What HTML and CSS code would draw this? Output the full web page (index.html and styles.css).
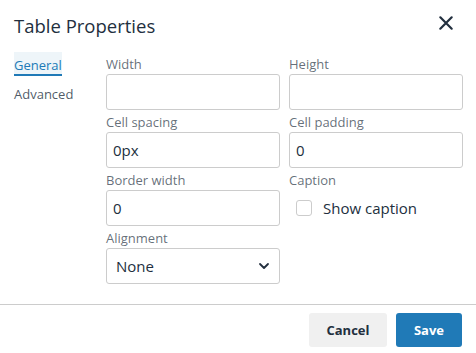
FILE: index.html
```html
<!DOCTYPE html>
<html lang="en">
<head>
  <meta charset="UTF-8">
  <title>Table Properties</title>
  <meta name="viewport" content="width=device-width, initial-scale=1">
  <link rel="stylesheet" href="styles.css">
</head>
<body>
  <div class="dialog">
    <div class="dialog-header">
      <h2>Table Properties</h2>
      <button class="close" aria-label="Close">
        <svg width="24" height="24" viewBox="0 0 24 24"><path d="M6.3 6.3l11.4 11.4M17.7 6.3l-11.4 11.4" stroke="#222f3e" stroke-width="2.2" stroke-linecap="round"/></svg>
      </button>
    </div>

    <div class="dialog-body">
      <div class="tabs">
        <div class="tab active">General</div>
        <div class="tab">Advanced</div>
      </div>

      <form class="form-grid">
        <div class="field">
          <label for="width">Width</label>
          <input type="text" id="width">
        </div>
        <div class="field">
          <label for="height">Height</label>
          <input type="text" id="height">
        </div>
        <div class="field">
          <label for="cellspacing">Cell spacing</label>
          <input type="text" id="cellspacing" value="0px">
        </div>
        <div class="field">
          <label for="cellpadding">Cell padding</label>
          <input type="text" id="cellpadding" value="0">
        </div>
        <div class="field">
          <label for="border">Border width</label>
          <input type="text" id="border" value="0">
        </div>
        <div class="field">
          <label>Caption</label>
          <div class="checkbox-row">
            <span class="checkbox"></span>
            <span>Show caption</span>
          </div>
        </div>
        <div class="field">
          <label for="align">Alignment</label>
          <div class="select">
            <span>None</span>
            <svg width="12" height="8" viewBox="0 0 12 8"><path d="M2 2l4 4 4-4" stroke="#222f3e" stroke-width="1.8" fill="none" stroke-linecap="round" stroke-linejoin="round"/></svg>
          </div>
        </div>
      </form>
    </div>

    <div class="dialog-footer">
      <button class="btn btn-secondary">Cancel</button>
      <button class="btn btn-primary">Save</button>
    </div>
  </div>
</body>
</html>
```

FILE: styles.css
```css
body {
  margin: 0;
  background-color: #fff;
  font-family: 'Open Sans', sans-serif;
  color: #222f3e;
}

.dialog {
  width: 476px;
  height: 353px;
  display: flex;
  flex-direction: column;
}

.dialog-header {
  display: flex;
  align-items: center;
  justify-content: space-between;
  height: 46px;
  padding: 0 14px 0 14px;
}

h2 {
  margin: 0;
  padding-top: 4px;
  font-size: 18.5px;
  font-weight: 400;
}

.close {
  background: none;
  border: none;
  padding: 0;
  width: 24px;
  height: 24px;
  margin-right: 4px;
  cursor: pointer;
}

.dialog-body {
  display: flex;
  align-items: flex-start;
  padding: 6px 14px 0 14px;
  flex: 1;
}

.tabs {
  width: 92px;
  flex-shrink: 0;
}

.tab {
  display: table;
  font-size: 13px;
  line-height: 18px;
  padding: 4px 0 0 0;
  margin-bottom: 5px;
  color: rgba(34, 47, 62, 0.8);
}

.tab.active {
  color: #207ab7;
  background-color: rgba(32, 122, 183, 0.08);
  border-bottom: 2px solid #207ab7;
}

.form-grid {
  display: grid;
  grid-template-columns: 174px 174px;
  column-gap: 9px;
  row-gap: 0;
  margin: 0;
}

label {
  display: block;
  font-size: 13px;
  line-height: 18px;
  padding: 3px 0 1px 0;
  color: rgba(34, 47, 62, 0.7);
}

input, .select {
  display: block;
  box-sizing: border-box;
  width: 100%;
  height: 36px;
  border: 1px solid #ccc;
  border-radius: 3px;
  padding: 5px 6px;
  font-family: 'Open Sans', sans-serif;
  font-size: 15px;
  color: #222f3e;
  margin: 0;
}

.select {
  display: flex;
  align-items: center;
  justify-content: space-between;
  padding: 0 9px 0 9px;
}

.checkbox-row {
  display: flex;
  align-items: center;
  height: 36px;
  padding-left: 7px;
  font-size: 15px;
}

.checkbox {
  box-sizing: border-box;
  width: 16px;
  height: 16px;
  border: 1px solid #ccc;
  border-radius: 3px;
  margin-right: 11px;
}

.dialog-footer {
  display: flex;
  justify-content: flex-end;
  gap: 9px;
  border-top: 1px solid #ccc;
  padding: 8px 14px 6px 14px;
}

.btn {
  font-family: 'Open Sans', sans-serif;
  font-size: 13px;
  font-weight: 700;
  height: 34px;
  padding: 0 12px;
  border-radius: 3px;
  border: none;
  cursor: pointer;
}

.btn-secondary {
  background-color: #f0f0f0;
  color: #222f3e;
  width: 78px;
}

.btn-primary {
  background-color: #207ab7;
  color: #fff;
  width: 66px;
}
```
